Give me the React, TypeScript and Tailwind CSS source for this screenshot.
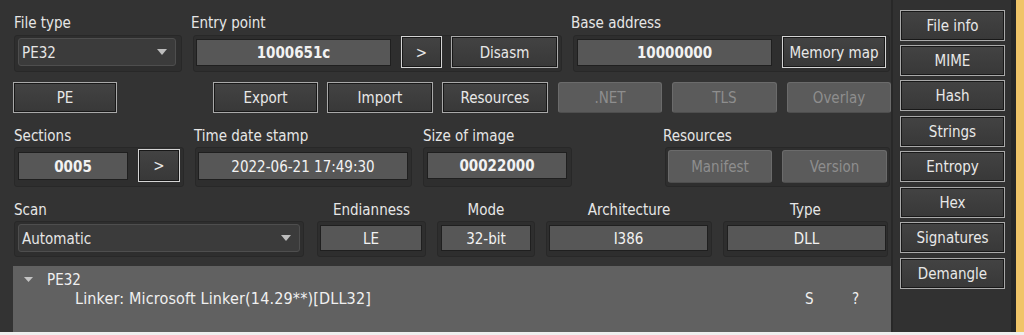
import clsx from 'clsx'

const Btn = ({ label, className, bright }: { label: string; className: string; bright?: boolean }) => (
  <div
    className={clsx(
      'flex items-center justify-center border bg-linear-to-b from-[#434343] to-[#383838] pt-[2px] text-[#e8e8e8] shadow-[inset_0_0_0_1px_#181818]',
      bright ? 'border-[#d4d4d4]' : 'border-[#a9a9a9]',
      className,
    )}
  >
    {label}
  </div>
)

const OffBtn = ({ label, className }: { label: string; className: string }) => (
  <div
    className={clsx(
      'flex items-center justify-center rounded-[3px] border border-[#6b6b6b] border-b-[#4e4e4e] bg-[#5b5b5b] pt-[2px] text-[#8e8e8e]',
      className,
    )}
  >
    {label}
  </div>
)

const Edit = ({ value, bold, className }: { value: string; bold?: boolean; className: string }) => (
  <div
    className={clsx(
      'flex items-center justify-center border border-[#1f1f1f] bg-[#575757] pt-[2px] text-[#f2f2f2]',
      bold && 'font-bold',
      className,
    )}
  >
    {value}
  </div>
)

const Combo = ({ value, className }: { value: string; className: string }) => (
  <div
    className={clsx(
      'flex items-center justify-between rounded-[3px] border border-[#4e4e4e] bg-[#3b3b3b] pl-[3px] pr-[8px] text-[#e6e6e6]',
      className,
    )}
  >
    <span className="pt-[2px]">{value}</span>
    <svg width="10" height="6" viewBox="0 0 10 6">
      <path d="M0 0h10L5 6z" fill="#bdbdbd" />
    </svg>
  </div>
)

const Label = ({ text, className }: { text: string; className?: string }) => (
  <div className={clsx('h-[18px] pt-[1px] leading-[18px] text-[#e6e6e6] whitespace-nowrap', className)}>{text}</div>
)

const frame = 'flex items-start rounded-[3px] border border-[#282828] bg-[#2e2e2e]'

const sideButtons = [
  { label: 'File info', mt: 'mt-[10px]' },
  { label: 'MIME', mt: 'mt-[4px]' },
  { label: 'Hash', mt: 'mt-[4px]' },
  { label: 'Strings', mt: 'mt-[5px]' },
  { label: 'Entropy', mt: 'mt-[4px]' },
  { label: 'Hex', mt: 'mt-[5px]' },
  { label: 'Signatures', mt: 'mt-[4px]' },
  { label: 'Demangle', mt: 'mt-[5px]' },
]

export default function App() {
  return (
    <div className="flex h-[335px] w-[1024px] flex-col bg-[#333333] font-['DejaVu_Sans_Condensed','DejaVu_Sans',sans-serif] text-[15px]">
      <div className="flex h-[332px]">
        {/* main area */}
        <div className="flex w-[891px] flex-col pt-[13px]">
          {/* row 1 */}
          <div className="flex">
            <div className="ml-[14px] flex flex-col">
              <Label text="File type" />
              <div className={clsx(frame, 'mt-[4px] h-[37px] w-[168px]')}>
                <Combo value="PE32" className="ml-[3px] mt-[2px] h-[28px] w-[158px]" />
              </div>
            </div>
            <div className="ml-[11px] flex flex-col">
              <Label text="Entry point" className="-ml-[2px]" />
              <div className={clsx(frame, 'mt-[4px] h-[37px] w-[369px]')}>
                <Edit value="1000651c" bold className="ml-[2px] mt-[3px] h-[27px] w-[195px]" />
                <Btn label=">" bright className="ml-[10px] h-[32px] w-[41px]" />
                <Btn label="Disasm" className="ml-[9px] h-[32px] w-[107px]" />
              </div>
            </div>
            <div className="ml-[11px] flex flex-col">
              <Label text="Base address" className="-ml-[2px]" />
              <div className={clsx(frame, 'mt-[4px] h-[37px] w-[317px]')}>
                <Edit value="10000000" bold className="ml-[3px] mt-[3px] h-[27px] w-[195px]" />
                <Btn label="Memory map" bright className="ml-[10px] h-[32px] w-[104px]" />
              </div>
            </div>
          </div>

          {/* row 2 */}
          <div className="mt-[10px] flex h-[31px]">
            <Btn label="PE" className="ml-[13px] w-[104px]" />
            <Btn label="Export" className="ml-[96px] w-[105px]" />
            <Btn label="Import" className="ml-[9px] w-[106px]" />
            <Btn label="Resources" className="ml-[9px] w-[106px]" />
            <OffBtn label=".NET" className="ml-[10px] w-[104px]" />
            <OffBtn label="TLS" className="ml-[10px] w-[105px]" />
            <OffBtn label="Overlay" className="ml-[10px] w-[104px]" />
          </div>

          {/* row 3 */}
          <div className="mt-[13px] flex">
            <div className="ml-[14px] flex flex-col">
              <Label text="Sections" />
              <div className={clsx(frame, 'mt-[3px] h-[40px] w-[170px]')}>
                <Edit value="0005" bold className="ml-[3px] mt-[4px] h-[28px] w-[110px]" />
                <Btn label=">" bright className="ml-[10px] mt-[1px] h-[33px] w-[42px]" />
              </div>
            </div>
            <div className="ml-[11px] flex flex-col">
              <Label text="Time date stamp" className="-ml-[1px]" />
              <div className={clsx(frame, 'mt-[3px] h-[40px] w-[217px]')}>
                <Edit value="2022-06-21 17:49:30" className="ml-[2px] mt-[4px] h-[28px] w-[210px]" />
              </div>
            </div>
            <div className="ml-[11px] flex flex-col">
              <Label text="Size of image" />
              <div className={clsx(frame, 'mt-[3px] h-[40px] w-[149px]')}>
                <Edit value="00022000" bold className="ml-[3px] mt-[4px] h-[27px] w-[140px]" />
              </div>
            </div>
            <div className="ml-[93px] flex flex-col">
              <Label text="Resources" className="-ml-[2px]" />
              <div className={clsx(frame, 'mt-[3px] h-[40px] w-[225px]')}>
                <OffBtn label="Manifest" className="ml-[2px] mt-[2px] h-[33px] w-[104px]" />
                <OffBtn label="Version" className="ml-[10px] mt-[2px] h-[33px] w-[105px]" />
              </div>
            </div>
          </div>

          {/* row 4 */}
          <div className="mt-[13px] flex">
            <div className="ml-[14px] flex flex-col">
              <Label text="Scan" />
              <div className={clsx(frame, 'mt-[3px] h-[36px] w-[290px]')}>
                <Combo value="Automatic" className="ml-[3px] mt-[2px] h-[28px] w-[282px]" />
              </div>
            </div>
            <div className="ml-[13px] flex flex-col">
              <Label text="Endianness" className="text-center" />
              <div className={clsx(frame, 'mt-[3px] h-[36px] w-[109px]')}>
                <Edit value="LE" className="ml-[2px] mt-[3px] h-[26px] w-[102px]" />
              </div>
            </div>
            <div className="ml-[11px] flex flex-col">
              <Label text="Mode" className="text-center" />
              <div className={clsx(frame, 'mt-[3px] h-[36px] w-[98px]')}>
                <Edit value="32-bit" className="ml-[3px] mt-[3px] h-[26px] w-[90px]" />
              </div>
            </div>
            <div className="ml-[11px] flex flex-col">
              <Label text="Architecture" className="text-center" />
              <div className={clsx(frame, 'mt-[3px] h-[36px] w-[166px]')}>
                <Edit value="I386" className="ml-[2px] mt-[3px] h-[26px] w-[159px]" />
              </div>
            </div>
            <div className="ml-[11px] flex flex-col">
              <Label text="Type" className="text-center" />
              <div className={clsx(frame, 'mt-[3px] h-[36px] w-[165px]')}>
                <Edit value="DLL" className="ml-[3px] mt-[3px] h-[26px] w-[159px]" />
              </div>
            </div>
          </div>

          {/* results */}
          <div className="ml-[13px] mt-[9px] flex h-[66px] w-[878px] flex-col bg-[#616161] pt-[5px] text-[#f0f0f0]">
            <div className="flex h-[18px] items-center">
              <svg width="9" height="5" viewBox="0 0 9 5" className="ml-[11px] -mt-[2px]">
                <path d="M0 0h9L4.5 5z" fill="#c4c4c4" />
              </svg>
              <span className="ml-[14px]">PE32</span>
            </div>
            <div className="flex h-[20px] items-center">
              <span className="ml-[62px] w-[730px] whitespace-nowrap text-[16px] tracking-[0.15px]">
                Linker: Microsoft Linker(14.29**)[DLL32]
              </span>
              <span className="w-[47px]">S</span>
              <span>?</span>
            </div>
          </div>
        </div>

        <div className="w-[2px] bg-[#282828]" />

        {/* side buttons */}
        <div className="flex w-[118px] flex-col bg-[#313131]">
          {sideButtons.map(b => (
            <Btn key={b.label} label={b.label} className={clsx('ml-[7px] h-[31px] w-[105px]', b.mt)} />
          ))}
        </div>
        <div className="w-[5px] bg-[#262626]" />
        <div className="w-[8px] bg-[#f0c468]" />
      </div>
      <div className="h-[3px] bg-[#efefef]" />
    </div>
  )
}
